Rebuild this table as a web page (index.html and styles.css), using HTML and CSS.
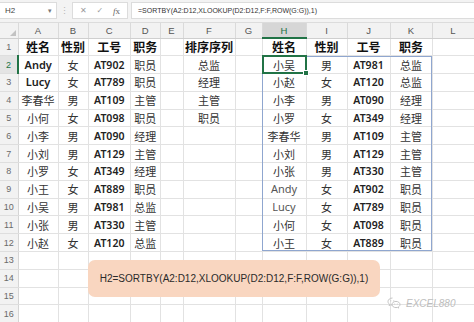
FILE: index.html
```html
<!DOCTYPE html>
<html lang="zh-CN">
<head>
    <meta charset="UTF-8">
    <title>SORTBY XLOOKUP</title>
    <link rel="stylesheet" href="styles.css">
</head>
<body>

<div class="app">
    <div class="fbar">
        <div class="namebox">H2<span class="caret">▾</span></div>
        <div class="grip">⋮</div>
        <div class="fbtns">
            <span class="x">✕</span>
            <span class="ok">✓</span>
            <span class="fx"><i>f</i>x</span>
        </div>
        <div class="finput">=SORTBY(A2:D12,XLOOKUP(D2:D12,F:F,ROW(G:G)),1)</div>
    </div>

    <div class="sheet">
        <table class="grid">
            <colgroup>
                <col style="width:18px"><col style="width:40px"><col style="width:30px"><col style="width:42.5px">
                <col style="width:29.5px"><col style="width:23px"><col style="width:52px"><col style="width:27px">
                <col style="width:44px"><col style="width:41px"><col style="width:43px"><col style="width:42px">
                <col style="width:42px">
            </colgroup>
            <tr class="colhead">
                <th class="corner"><span class="tri"></span></th>
                <th>A</th><th>B</th><th>C</th><th>D</th><th>E</th><th>F</th><th>G</th>
                <th class="sel">H</th><th>I</th><th>J</th><th>K</th><th>L</th>
            </tr>
            <tr class="title">
                <th>1</th>
                <td>姓名</td><td>性别</td><td>工号</td><td>职务</td><td></td><td>排序序列</td><td></td>
                <td>姓名</td><td>性别</td><td>工号</td><td>职务</td><td></td>
            </tr>
            <tr>
                <th class="selrow">2</th>
                <td class="en">Andy</td><td>女</td><td class="id">AT902</td><td>职员</td><td></td><td>总监</td><td></td>
                <td>小吴</td><td>男</td><td class="id">AT981</td><td>总监</td><td></td>
            </tr>
            <tr>
                <th>3</th>
                <td class="en">Lucy</td><td>女</td><td class="id">AT789</td><td>职员</td><td></td><td>经理</td><td></td>
                <td>小赵</td><td>女</td><td class="id">AT120</td><td>总监</td><td></td>
            </tr>
            <tr>
                <th>4</th>
                <td>李春华</td><td>男</td><td class="id">AT109</td><td>主管</td><td></td><td>主管</td><td></td>
                <td>小李</td><td>男</td><td class="id">AT090</td><td>经理</td><td></td>
            </tr>
            <tr>
                <th>5</th>
                <td>小何</td><td>女</td><td class="id">AT098</td><td>职员</td><td></td><td>职员</td><td></td>
                <td>小罗</td><td>女</td><td class="id">AT349</td><td>经理</td><td></td>
            </tr>
            <tr>
                <th>6</th>
                <td>小李</td><td>男</td><td class="id">AT090</td><td>经理</td><td></td><td></td><td></td>
                <td>李春华</td><td>男</td><td class="id">AT109</td><td>主管</td><td></td>
            </tr>
            <tr>
                <th>7</th>
                <td>小刘</td><td>男</td><td class="id">AT129</td><td>主管</td><td></td><td></td><td></td>
                <td>小刘</td><td>男</td><td class="id">AT129</td><td>主管</td><td></td>
            </tr>
            <tr>
                <th>8</th>
                <td>小罗</td><td>女</td><td class="id">AT349</td><td>经理</td><td></td><td></td><td></td>
                <td>小张</td><td>男</td><td class="id">AT330</td><td>主管</td><td></td>
            </tr>
            <tr>
                <th>9</th>
                <td>小王</td><td>女</td><td class="id">AT889</td><td>职员</td><td></td><td></td><td></td>
                <td class="en light">Andy</td><td>女</td><td class="id">AT902</td><td>职员</td><td></td>
            </tr>
            <tr>
                <th>10</th>
                <td>小吴</td><td>男</td><td class="id">AT981</td><td>总监</td><td></td><td></td><td></td>
                <td class="en light">Lucy</td><td>女</td><td class="id">AT789</td><td>职员</td><td></td>
            </tr>
            <tr>
                <th>11</th>
                <td>小张</td><td>男</td><td class="id">AT330</td><td>主管</td><td></td><td></td><td></td>
                <td>小何</td><td>女</td><td class="id">AT098</td><td>职员</td><td></td>
            </tr>
            <tr>
                <th>12</th>
                <td>小赵</td><td>女</td><td class="id">AT120</td><td>总监</td><td></td><td></td><td></td>
                <td>小王</td><td>女</td><td class="id">AT889</td><td>职员</td><td></td>
            </tr>
            <tr><th>13</th><td></td><td></td><td></td><td></td><td></td><td></td><td></td><td></td><td></td><td></td><td></td><td></td></tr>
            <tr><th>14</th><td></td><td></td><td></td><td></td><td></td><td></td><td></td><td></td><td></td><td></td><td></td><td></td></tr>
            <tr><th>15</th><td></td><td></td><td></td><td></td><td></td><td></td><td></td><td></td><td></td><td></td><td></td><td></td></tr>
            <tr><th>16</th><td></td><td></td><td></td><td></td><td></td><td></td><td></td><td></td><td></td><td></td><td></td><td></td></tr>
        </table>

        <!-- spill range + active cell sit on top of the grid -->
        <div class="spill"></div>
        <div class="active"><span class="handle"></span></div>

        <div class="note">H2=SORTBY(A2:D12,XLOOKUP(D2:D12,F:F,ROW(G:G)),1)</div>

        <div class="mark">
            <svg width="14" height="12" viewBox="0 0 14 12">
                <path d="M5.5 1C2.9 1 1 2.7 1 4.6c0 1.1.6 2 1.5 2.7L2.1 8.6l1.6-.8c.5.2 1.1.3 1.8.3" fill="none" stroke="#c4c4c4" stroke-width="1"/>
                <path d="M9 4.4c-2.3 0-4 1.4-4 3.1s1.7 3.1 4 3.1c.5 0 1-.1 1.4-.2l1.3.7-.3-1.1c.9-.6 1.6-1.5 1.6-2.5 0-1.700-1.8-3.1-4-3.1z" fill="none" stroke="#c4c4c4" stroke-width="1"/>
                <circle cx="3.8" cy="3.8" r=".6" fill="#c4c4c4"/>
                <circle cx="6.8" cy="3.8" r=".6" fill="#c4c4c4"/>
                <circle cx="7.7" cy="7" r=".5" fill="#c4c4c4"/>
                <circle cx="10.3" cy="7" r=".5" fill="#c4c4c4"/>
            </svg>
            EXCEL880
        </div>
    </div>
</div>

</body>
</html>
```

FILE: styles.css
```css
body {
    margin: 0;
    background: #fff;
    font-family: "Noto Sans CJK SC", "Noto Sans", sans-serif;
    color: #222;
}
.app {
    width: 474px;
    height: 322px;
    overflow: hidden;
}

/* formula bar */
.fbar {
    height: 23px;
    box-sizing: border-box;
    padding: 2px 0 3px 0;
    background: #f3f3f3;
    border-bottom: 1px solid #dcdcdc;
    display: flex;
    align-items: stretch;
}
.namebox {
    width: 57px;
    box-sizing: border-box;
    background: #fff;
    border: 1px solid #dcdcdc;
    border-left: none;
    display: flex;
    align-items: center;
    justify-content: space-between;
    padding: 0 4px 0 5px;
    font-family: "Liberation Sans", sans-serif;
    font-size: 8px;
    color: #444;
}
.caret {
    font-size: 7px;
    color: #777;
}
.grip {
    width: 15px;
    display: flex;
    align-items: center;
    justify-content: center;
    font-size: 9px;
    color: #b5b5b5;
}
.fbtns {
    width: 56px;
    box-sizing: border-box;
    background: #fff;
    border: 1px solid #dcdcdc;
    display: flex;
    align-items: center;
    justify-content: space-around;
    padding: 0 2px;
    font-family: "DejaVu Sans", sans-serif;
    font-size: 8px;
    color: #9a9a9a;
}
.fbtns .fx {
    font-family: "Liberation Serif", serif;
    font-size: 9px;
    color: #666;
}
.finput {
    flex: 1;
    margin-left: 3px;
    background: #fff;
    border: 1px solid #dcdcdc;
    border-right: none;
    display: flex;
    align-items: center;
    padding-left: 6px;
    font-family: "Liberation Sans", sans-serif;
    font-size: 7px;
    color: #333;
    white-space: nowrap;
}

/* sheet */
.sheet {
    position: relative;
}
.grid {
    table-layout: fixed;
    border-collapse: collapse;
    width: 474px;
}
.grid th,
.grid td {
    padding: 0;
    text-align: center;
    white-space: nowrap;
    overflow: hidden;
}
.grid tr {
    height: 17.8px;
}
.grid td {
    border: 1px solid #e2e2e2;
    border-top: none;
    font-size: 11px;
    line-height: 16px;
    color: #333;
}
.grid th {
    background: #f2f2f2;
    border-right: 1px solid #d5d5d5;
    border-bottom: 1px solid #dedede;
    font-family: "Liberation Sans", sans-serif;
    font-weight: normal;
    font-size: 9px;
    color: #6a6a6a;
}
.grid .colhead {
    height: 15px;
}
.grid .colhead th {
    font-family: "Liberation Sans", sans-serif;
    font-size: 9.5px;
    color: #555;
    border-bottom: 1px solid #cfcfcf;
    border-right: 1px solid #dadada;
}
.grid .colhead th.sel {
    background: #d6d6d6;
    color: #217346;
    border-bottom: 2px solid #217346;
}
.grid th.selrow {
    background: #e4e4e4;
    color: #217346;
    border-right: 2px solid #217346;
}
.corner {
    position: relative;
}
.tri {
    position: absolute;
    right: 2px;
    bottom: 2px;
    width: 0;
    height: 0;
    border-left: 6px solid transparent;
    border-bottom: 6px solid #c2c2c2;
}
.grid .title td {
    font-size: 12px;
    font-weight: bold;
    color: #111;
}
.grid td.en {
    font-family: "Noto Sans", sans-serif;
    font-weight: 600;
    color: #222;
}
.grid td.en.light {
    font-weight: normal;
    color: #555;
}
.grid td.id {
    font-family: "Noto Sans", sans-serif;
    font-weight: 600;
    font-size: 10.5px;
    color: #222;
}

/* overlays */
.spill {
    position: absolute;
    left: 262px;
    top: 32.6px;
    width: 170px;
    height: 195px;
    box-sizing: border-box;
    border: 1px solid #8fa6cf;
    pointer-events: none;
}
.active {
    position: absolute;
    left: 261.5px;
    top: 32px;
    width: 45px;
    height: 19px;
    box-sizing: border-box;
    border: 2px solid #217346;
}
.handle {
    position: absolute;
    right: -4px;
    bottom: -4px;
    width: 4px;
    height: 4px;
    background: #217346;
    border: 1px solid #fff;
}
.note {
    position: absolute;
    left: 88px;
    top: 237px;
    width: 292px;
    height: 37px;
    border-radius: 7px;
    background: #f9d6c0;
    display: flex;
    align-items: center;
    justify-content: center;
    font-family: "Liberation Sans", sans-serif;
    font-size: 10px;
    color: #2a2a2a;
}
.mark {
    position: absolute;
    left: 387px;
    top: 274px;
    display: flex;
    align-items: center;
    gap: 5px;
    font-family: "Liberation Sans", sans-serif;
    font-style: italic;
    font-size: 10px;
    color: #bdbdbd;
}
```
